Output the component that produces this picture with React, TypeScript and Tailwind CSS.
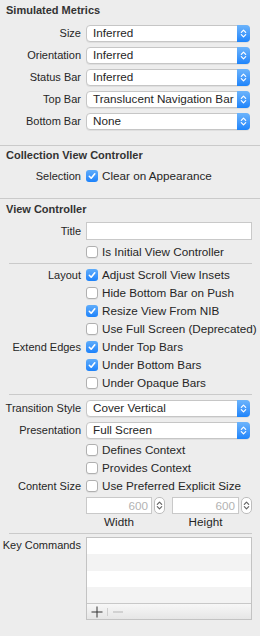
import React from "react";

const txt = "text-[11.7px] leading-none text-[#262626]";
const lbl = "text-[11px] leading-none text-[#262626]";

function Chevrons({ color = "white" }: { color?: string }) {
  return (
    <svg width="7" height="11" viewBox="0 0 7 11" fill="none">
      <path d="M1.3 4.3 L3.5 2.1 L5.7 4.3" stroke={color} strokeWidth="1.2" strokeLinecap="round" strokeLinejoin="round" />
      <path d="M1.3 6.7 L3.5 8.9 L5.7 6.7" stroke={color} strokeWidth="1.2" strokeLinecap="round" strokeLinejoin="round" />
    </svg>
  );
}

function Popup({ value }: { value: string }) {
  return (
    <div className="relative flex h-[17px] w-[164px] items-center rounded-[4px] border border-[#c6c6c6] bg-white shadow-[0_1px_0_rgba(0,0,0,0.06)]">
      <span className={`pl-[6px] ${txt}`}>{value}</span>
      <div className="absolute -top-px -bottom-px -right-px flex w-[13px] items-center justify-center rounded-r-[4px] bg-gradient-to-b from-[#6cb4fb] to-[#1b84fb]">
        <Chevrons />
      </div>
    </div>
  );
}

function Check({ on }: { on: boolean }) {
  if (on) {
    return (
      <div className="flex h-[12px] w-[12px] shrink-0 items-center justify-center rounded-[3px] bg-gradient-to-b from-[#5eacfa] to-[#1a82fb]">
        <svg width="10" height="10" viewBox="0 0 10 10" fill="none">
          <path d="M2.3 5.3 L4.2 7.2 L7.8 2.8" stroke="white" strokeWidth="1.6" strokeLinecap="round" strokeLinejoin="round" />
        </svg>
      </div>
    );
  }
  return <div className="h-[12px] w-[12px] shrink-0 rounded-[3px] border border-[#b0b0b0] bg-white shadow-[0_1px_0_rgba(0,0,0,0.05)]" />;
}

function Row({ label, children, h = "h-[22px]" }: { label?: string; children: React.ReactNode; h?: string }) {
  return (
    <div className={`grid grid-cols-[81px_1fr] items-center gap-x-[5px] ${h}`}>
      <div className={`whitespace-nowrap text-right ${lbl}`}>{label ?? ""}</div>
      <div className="flex items-center">{children}</div>
    </div>
  );
}

function CheckRow({ label, text, on }: { label?: string; text: string; on: boolean }) {
  return (
    <Row label={label} h="h-[18px]">
      <Check on={on} />
      <span className={`ml-[4px] whitespace-nowrap ${txt}`}>{text}</span>
    </Row>
  );
}

function Header({ children }: { children: React.ReactNode }) {
  return <div className="pl-[6px] text-[11px] font-bold leading-none text-[#333]">{children}</div>;
}

function NumField({ w }: { w: string }) {
  return (
    <div className="flex items-center gap-[2px]">
      <div className={`flex h-[17px] ${w} items-center justify-end border border-[#c9c9c9] bg-white pr-[3px] text-[11.7px] leading-none text-[#b3b3b3]`}>600</div>
      <div className="flex h-[17px] w-[11px] items-center justify-center rounded-[5px] border border-[#bdbdbd] bg-white">
        <Chevrons color="#666" />
      </div>
    </div>
  );
}

export default function App() {
  return (
    <div className="h-[636px] w-[260px] overflow-hidden bg-[#ededed] font-['Liberation_Sans',Arial,sans-serif]">
      {/* Simulated Metrics */}
      <div className="h-[22px] pt-[5px]">
        <Header>Simulated Metrics</Header>
      </div>
      <Row label="Size"><Popup value="Inferred" /></Row>
      <Row label="Orientation"><Popup value="Inferred" /></Row>
      <Row label="Status Bar"><Popup value="Inferred" /></Row>
      <Row label="Top Bar"><Popup value="Translucent Navigation Bar" /></Row>
      <Row label="Bottom Bar"><Popup value="None" /></Row>
      <div className="mt-[13px] h-px bg-[#cacaca]" />

      {/* Collection View Controller */}
      <div className="flex h-[19px] items-center">
        <Header>Collection View Controller</Header>
      </div>
      <Row label="Selection">
        <Check on />
        <span className={`ml-[4px] ${txt}`}>Clear on Appearance</span>
      </Row>
      <div className="mt-[11px] h-px bg-[#cacaca]" />

      {/* View Controller */}
      <div className="flex h-[20px] items-center">
        <Header>View Controller</Header>
      </div>
      <Row label="Title" h="h-[24px]">
        <div className="h-[18px] w-[166px] border border-[#c9c9c9] bg-white" />
      </Row>
      <CheckRow text="Is Initial View Controller" on={false} />
      <div className="mx-[9px] mt-[2px] h-px w-[243px] bg-[#cacaca]" />
      <div className="mt-[2px]">
        <CheckRow label="Layout" text="Adjust Scroll View Insets" on />
        <CheckRow text="Hide Bottom Bar on Push" on={false} />
        <CheckRow text="Resize View From NIB" on />
        <CheckRow text="Use Full Screen (Deprecated)" on={false} />
        <CheckRow label="Extend Edges" text="Under Top Bars" on />
        <CheckRow text="Under Bottom Bars" on />
        <CheckRow text="Under Opaque Bars" on={false} />
      </div>
      <div className="mx-[9px] mt-[2px] h-px w-[243px] bg-[#cacaca]" />
      <div className="mt-[2px]">
        <Row label="Transition Style"><Popup value="Cover Vertical" /></Row>
        <Row label="Presentation"><Popup value="Full Screen" /></Row>
      </div>
      <CheckRow text="Defines Context" on={false} />
      <CheckRow text="Provides Context" on={false} />
      <CheckRow label="Content Size" text="Use Preferred Explicit Size" on={false} />
      <div className="mt-[1px]">
        <Row h="h-[19px]">
          <div className="flex gap-[7px]">
            <NumField w="w-[66px]" />
            <NumField w="w-[67px]" />
          </div>
        </Row>
        <Row h="h-[14px]">
          <div className="flex">
            <div className={`w-[66px] text-center ${txt}`}>Width</div>
            <div className={`ml-[20px] w-[67px] text-center ${txt}`}>Height</div>
          </div>
        </Row>
      </div>
      <div className="mx-[9px] mt-[4px] h-px w-[243px] bg-[#cacaca]" />

      {/* Key Commands */}
      <div className="mt-[3px] grid grid-cols-[81px_1fr] gap-x-[5px]">
        <div className={`whitespace-nowrap pt-[3px] text-right ${lbl} leading-[16px]`}>Key Commands</div>
        <div className="flex h-[83px] w-[166px] flex-col border border-[#c3c3c3] bg-white">
          <div className="h-[16px] bg-white" />
          <div className="h-[17px] bg-[#f3f3f3]" />
          <div className="h-[16px] bg-white" />
          <div className="h-[16px] bg-[#f3f3f3]" />
          <div className="flex flex-1 items-center border-t border-[#c8c8c8] bg-gradient-to-b from-[#f7f7f7] to-[#e6e6e6]">
            <svg width="40" height="14" viewBox="0 0 40 14" fill="none" className="ml-[3px]">
              <path d="M7 1.5 V12.5 M1.5 7 H12.5" stroke="#333" strokeWidth="1" />
              <path d="M17.5 3 V11" stroke="#cfcfcf" strokeWidth="1" />
              <path d="M23 7 H33" stroke="#b5b5b5" strokeWidth="1" />
            </svg>
          </div>
        </div>
      </div>
    </div>
  );
}
